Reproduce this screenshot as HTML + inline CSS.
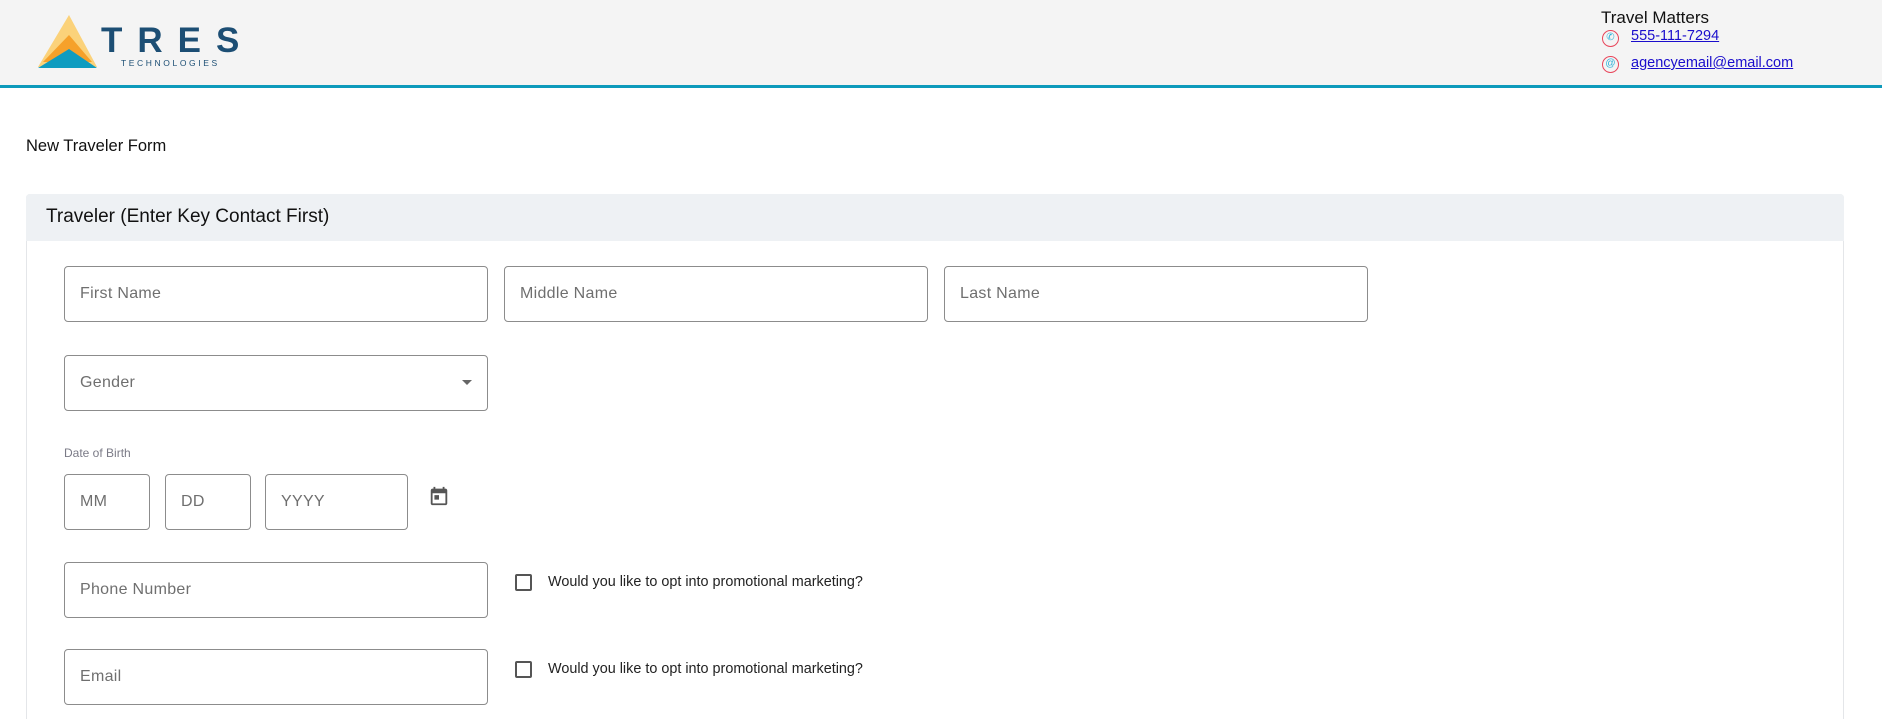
<!DOCTYPE html>
<html style="width:1882px;height:719px;overflow:hidden"><head><style>
*{box-sizing:border-box;margin:0;padding:0}
body{width:1882px;height:719px;overflow:hidden;background:#fff;font-family:"Liberation Sans",sans-serif;position:relative}
.hdr{position:absolute;left:0;top:0;width:1882px;height:88px;background:#f4f4f4;border-bottom:3px solid #0d9abb}
.abs{position:absolute}
.inp{position:absolute;border:1px solid #8c8c8c;border-radius:4px;height:56px;font-size:16px;color:#6f6f6f;padding-left:15px;line-height:54px;letter-spacing:.3px}
.cb{position:absolute;width:17px;height:17px;border:2px solid #555;border-radius:2px}
.cbt{position:absolute;font-size:14.4px;color:#222}
a{color:#1a0dcc;text-decoration:underline}
</style></head><body>
<div class="hdr">
<svg class="abs" style="left:36px;top:14px" width="62" height="55" viewBox="0 0 62 55">
<polygon points="33,1 61,53 2,53" fill="#fbd27a"/>
<polygon points="33,21 56,48 7,48" fill="#f6a12a"/>
<polygon points="33,35 61,54 2,54" fill="#0e9cc0"/>
</svg>
<div class="abs" style="left:101px;top:21px;font-size:35px;font-weight:bold;color:#1c4e74;letter-spacing:15px">TRES</div>
<div class="abs" style="left:121px;top:58px;font-size:8.5px;color:#1c4e74;letter-spacing:2.6px">TECHNOLOGIES</div>
<div class="abs" style="left:1601px;top:8px;font-size:17px;color:#111">Travel Matters</div>
<div class="abs" style="left:1602px;top:30px;width:17px;height:17px;border:1.5px solid #e8455a;border-radius:50%;font-size:10px;color:#2ab0d8;text-align:center;line-height:14px">✆</div>
<a class="abs" style="left:1631px;top:28px;font-size:14.5px">555-111-7294</a>
<div class="abs" style="left:1602px;top:56px;width:17px;height:17px;border:1.5px solid #e8455a;border-radius:50%;font-size:10px;color:#2ab0d8;text-align:center;line-height:14px">@</div>
<a class="abs" style="left:1631px;top:55px;font-size:14.5px">agencyemail@email.com</a>
</div>
<div class="abs" style="left:26px;top:137px;font-size:16.5px;color:#111">New Traveler Form</div>
<div class="abs" style="left:26px;top:194px;width:1818px;height:540px;border:1px solid #e4e6e9;border-radius:4px"></div>
<div class="abs" style="left:26px;top:194px;width:1818px;height:47px;background:#eef1f4;border-radius:4px 4px 0 0"></div>
<div class="abs" style="left:46px;top:206px;font-size:19px;color:#111">Traveler (Enter Key Contact First)</div>
<div class="inp" style="left:64px;top:266px;width:424px">First Name</div>
<div class="inp" style="left:504px;top:266px;width:424px">Middle Name</div>
<div class="inp" style="left:944px;top:266px;width:424px">Last Name</div>
<div class="inp" style="left:64px;top:355px;width:424px">Gender</div>
<div class="abs" style="left:462px;top:380px;width:0;height:0;border-left:5px solid transparent;border-right:5px solid transparent;border-top:5px solid #666"></div>
<div class="abs" style="left:64px;top:446px;font-size:12px;color:#7a7a86">Date of Birth</div>
<div class="inp" style="left:64px;top:474px;width:86px">MM</div>
<div class="inp" style="left:165px;top:474px;width:86px">DD</div>
<div class="inp" style="left:265px;top:474px;width:143px">YYYY</div>
<svg class="abs" style="left:428px;top:485px" width="22" height="22" viewBox="0 0 24 24"><path fill="#555" d="M19 4h-1V2h-2v2H8V2H6v2H5c-1.1 0-2 .9-2 2v14c0 1.1.9 2 2 2h14c1.1 0 2-.9 2-2V6c0-1.1-.9-2-2-2zm0 16H5V9h14v11zM7 11h5v5H7z"/></svg>
<div class="inp" style="left:64px;top:562px;width:424px">Phone Number</div>
<div class="cb" style="left:515px;top:574px"></div>
<div class="cbt" style="left:548px;top:574px">Would you like to opt into promotional marketing?</div>
<div class="inp" style="left:64px;top:649px;width:424px">Email</div>
<div class="cb" style="left:515px;top:661px"></div>
<div class="cbt" style="left:548px;top:661px">Would you like to opt into promotional marketing?</div>
</body></html>
